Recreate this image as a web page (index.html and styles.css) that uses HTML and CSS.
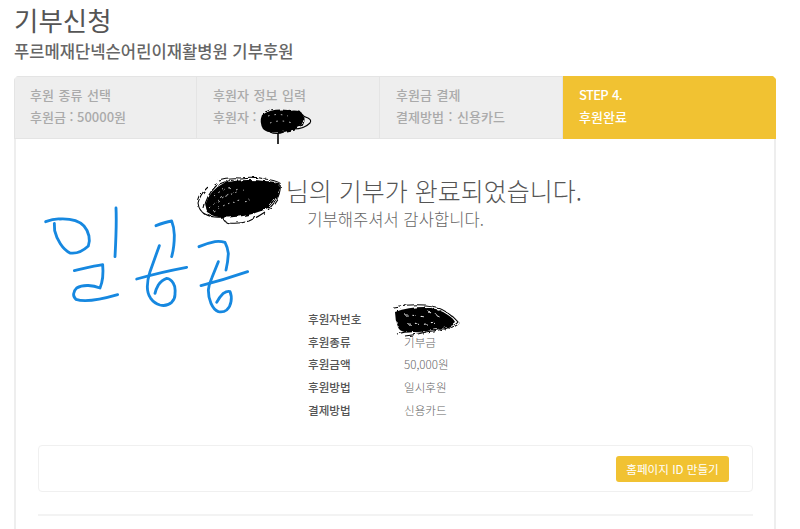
FILE: index.html
```html
<!DOCTYPE html>
<html lang="ko">
<head>
<meta charset="utf-8">
<title>기부신청</title>
<link rel="stylesheet" href="styles.css">
</head>
<body>
<main class="page">
  <h1 class="title">기부신청</h1>
  <h2 class="subtitle">푸르메재단넥슨어린이재활병원 기부후원</h2>
  <ol class="steps">
    <li class="step step-first"><strong>후원 종류 선택</strong><span>후원금 : 50000원</span></li>
    <li class="step step-second"><strong>후원자 정보 입력</strong><span>후원자 :</span></li>
    <li class="step step-third"><strong>후원금 결제</strong><span>결제방법 : 신용카드</span></li>
    <li class="step step-active"><strong>STEP 4.</strong><span>후원완료</span></li>
  </ol>
  <section class="panel">
    <p class="headline"><span class="name-gap"></span>님의 기부가 완료되었습니다.</p>
    <p class="thanks">기부해주셔서 감사합니다.</p>
    <dl class="summary">
      <dt>후원자번호</dt><dd></dd>
      <dt>후원종류</dt><dd>기부금</dd>
      <dt>후원금액</dt><dd>50,000원</dd>
      <dt>후원방법</dt><dd>일시후원</dd>
      <dt>결제방법</dt><dd>신용카드</dd>
    </dl>
    <div class="action-box"><a class="action" href="#">홈페이지 ID 만들기</a></div>
    <hr class="rule">
  </section>
</main>

<svg class="mark mark-hand" viewBox="0 0 900 510" aria-hidden="true">
  <defs>
    <filter id="rough" x="-10%" y="-10%" width="120%" height="120%">
      <feTurbulence type="fractalNoise" baseFrequency="0.18" numOctaves="2" seed="4"/>
      <feDisplacementMap in="SourceGraphic" scale="4"/>
    </filter>
  </defs>
  <g fill="none" stroke="#1688e0" stroke-width="8.5" stroke-linecap="round" stroke-linejoin="round">
    <path d="M77 185C90 180 105 176 120 177C145 176 175 180 192 198C207 215 212 240 205 258C190 272 170 282 150 279C128 268 110 238 104 212L103 190"/>
    <path d="M288 144C290 185 288 235 285 290"/>
    <path d="M163 332C190 326 220 318 248 314C250 335 248 365 240 384C220 376 190 372 170 384C158 395 158 410 168 418C195 428 245 418 293 404"/>
    <path d="M408 197Q435 186 455 183Q462 200 463 225Q463 262 455 290"/>
    <path d="M418 257L390 335Q382 360 382 380Q382 400 392 415Q403 430 420 435Q440 440 455 427Q466 416 465 400Q467 380 460 370Q452 356 440 355Q425 360 415 375Q408 387 405 400"/>
    <path d="M350 357Q420 337 500 322"/>
    <path d="M537 260Q560 250 585 245Q600 243 615 247Q623 262 625 280Q624 305 618 330"/>
    <path d="M595 305L575 355Q567 372 565 390Q565 412 573 430Q582 450 595 455Q610 458 620 450Q631 440 633 425Q636 408 630 395Q622 392 610 400Q598 412 590 427"/>
    <path d="M543 377Q610 360 683 335"/>
  </g>
</svg>

<svg class="mark mark-name" viewBox="0 0 90 54" aria-hidden="true">
  <g class="scribble">
    <path d="M10 27Q14 14 28 7Q46 2 68 5Q78 5 84 8Q84 20 72 32Q56 40 38 41Q20 43 12 37Q9 32 10 27Z" fill="#000"/>
    <g fill="none" stroke="#000" stroke-width="1.1">
      <path d="M12 11Q4 18 2 27Q3 35 9 38Q16 42 26 41"/>
      <path d="M27 41Q27 46 33 47Q44 48 53 45Q62 41 69 36"/>
      <path d="M84 7Q85 14 82 21Q78 28 72 34"/>
      <path d="M22 4Q32 1 44 2Q58 0 69 3Q78 4 84 7"/>
      <path d="M8 33Q10 20 20 10Q28 5 38 4"/>
    </g>
    <g fill="none" stroke="#fff" stroke-width=".9" stroke-dasharray="1.5 4">
      <path d="M13 32Q22 24 31 19Q42 14 51 12"/>
      <path d="M17 35Q26 30 34 27Q44 25 54 24"/>
      <path d="M20 26Q32 17 44 17"/>
      <path d="M18 20Q26 13 36 11"/>
    </g>
  </g>
</svg>

<svg class="mark mark-donor" viewBox="0 0 54 38" aria-hidden="true">
  <path class="scribble" d="M4 8Q14 1 30 3Q42 1 45 8Q47 14 42 20Q32 25 22 25Q10 27 5 22Q1 15 4 8Z" fill="#000"/>
  <g fill="none" stroke="#000" stroke-width="1.1">
    <path d="M43 7Q46 10 50 11Q54 13 52 16Q46 22 36 22Q28 23 20 26"/>
    <path d="M12 25Q18 28 26 25"/>
    <path d="M20 26V37" stroke-width="1.6"/>
  </g>
  <g fill="none" stroke="#fff" stroke-width=".8" stroke-dasharray="1.5 5">
    <path d="M12 16Q22 12 34 16"/>
    <path d="M10 9Q20 6 30 9"/>
  </g>
</svg>

<svg class="mark mark-sponsor" viewBox="0 0 70 36" aria-hidden="true">
  <g class="scribble">
    <path d="M3 8Q16 3 33 3Q46 4 56 11Q62 15 64 19Q60 23 46 25Q30 29 13 28Q7 27 6 23Q3 16 3 8Z" fill="#000"/>
    <g fill="none" stroke="#000" stroke-width="1.1">
      <path d="M1 3Q16 0 33 1Q46 2 56 9Q62 13 67 19Q64 23 56 24Q44 27 33 28"/>
      <path d="M5 30Q16 26 30 28"/>
      <path d="M13 32Q24 31 34 28"/>
    </g>
    <g fill="none" stroke="#fff" stroke-width="1" stroke-dasharray="3 5">
      <path d="M13 11Q22 11 33 13"/>
      <path d="M16 20Q30 21 46 19"/>
      <path d="M3 19H10"/>
      <path d="M36 8Q44 10 50 14"/>
    </g>
  </g>
</svg>
</body>
</html>
```
FILE: styles.css
```css
* { box-sizing: border-box; }
html, body { margin: 0; height: 529px; overflow: hidden; background: #fff; }
body {
  font-family: "Noto Sans CJK KR", "Noto Sans", sans-serif;
  color: #555;
  position: relative;
}
.page { width: 762px; margin-left: 14px; }
.title {
  margin: 0;
  height: 38px;
  padding-top: 2px;
  font-size: 26.5px;
  line-height: 35px;
  font-weight: 400;
  color: #555;
}
.subtitle {
  margin: 0;
  height: 38px;
  padding-top: 1px;
  font-size: 16.6px;
  line-height: 24px;
  font-weight: 500;
  color: #666;
}
.steps {
  display: grid;
  grid-template-columns: 183px 183px 183px 213px;
  height: 63px;
  margin: 0;
  padding: 0;
  list-style: none;
  border-radius: 5px 5px 0 0;
  overflow: hidden;
}
.step {
  display: flex;
  flex-direction: column;
  gap: 3px;
  padding: 8px 0 0 15px;
  background: #eee;
  border: 1px solid #e4e4e4;
  border-width: 1px 1px 1px 0;
  color: #aaa;
  font-size: 13px;
  line-height: 19px;
  font-weight: 500;
}
.step strong, .step span { font-weight: 500; }
.step strong { word-spacing: 1px; }
.step-first { border-left-width: 1px; }
.step-second, .step-third { padding-left: 16px; }
.step-third span { word-spacing: 1px; }
.step-active {
  background: #f1c232;
  border-color: #f1c232;
  color: #fff;
  padding-left: 16px;
}
.step-active strong { letter-spacing: -0.7px; }
.panel {
  height: 400px;
  margin-top: -1px;
  padding: 34px 21px 0 22px;
  border: 2px solid #eee;
  border-top: 0;
}
.headline {
  display: flex;
  justify-content: center;
  margin: 0;
  height: 34px;
  font-size: 25px;
  line-height: 37px;
  font-weight: 300;
  color: #555;
}
.name-gap { width: 77px; }
.thanks {
  margin: 0;
  height: 26px;
  font-size: 16.6px;
  line-height: 26px;
  font-weight: 300;
  text-align: center;
  color: #666;
}
.summary {
  display: grid;
  grid-template-columns: 96px 1fr;
  grid-auto-rows: 22.7px;
  margin: 76px 0 0 270px;
  font-size: 11.6px;
  line-height: 22.7px;
}
.summary dt { font-weight: 500; color: #555; }
.summary dd { margin: 0; font-weight: 300; color: #666; }
.action-box {
  display: flex;
  justify-content: flex-end;
  align-items: center;
  height: 47px;
  margin-top: 24px;
  padding-right: 23px;
  border: 1px solid #f0f0f0;
  border-radius: 4px;
}
.action {
  display: flex;
  align-items: center;
  justify-content: center;
  width: 113px;
  height: 26px;
  border-radius: 3px;
  background: #f1c232;
  color: #fff;
  font-size: 11.6px;
  text-decoration: none;
}
.rule {
  margin: 22px 0 0;
  border: 0;
  border-top: 2px solid #f3f3f3;
}
.mark { position: absolute; display: block; }
.mark-hand { left: 20px; top: 160px; width: 300px; height: 170px; }
.mark-name { left: 196px; top: 176px; width: 90px; height: 54px; }
.mark-donor { left: 258px; top: 107px; width: 54px; height: 38px; }
.mark-sponsor { left: 392px; top: 304px; width: 70px; height: 36px; }
.scribble { filter: url(#rough); }
```
